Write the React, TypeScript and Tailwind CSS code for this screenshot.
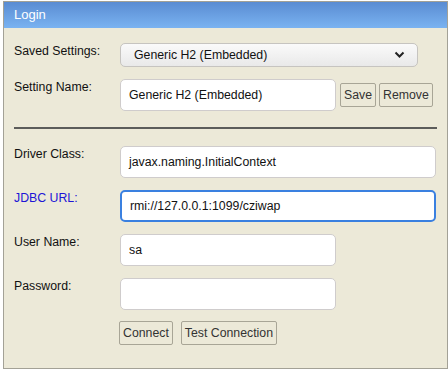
import React from "react";

const font = { fontFamily: '"Liberation Sans", Arial, sans-serif' };

function Label({ children, blue }: { children: React.ReactNode; blue?: boolean }) {
  return (
    <div className={`w-[106px] shrink-0 text-[12.3px] leading-[15px] pt-[1px] ${blue ? "text-[#2014d6]" : "text-[#111]"}`}>
      {children}
    </div>
  );
}

function Input({ value, w, focus }: { value: string; w: string; focus?: boolean }) {
  return (
    <div
      className={`${w} h-[32px] rounded-[5px] bg-white flex items-center pl-[8px] text-[12.3px] text-[#111] ${
        focus ? "border-2 border-[#3a80e0] pl-[7px]" : "border border-[#cfcccc]"
      }`}
    >
      {value}
    </div>
  );
}

function Btn({ children }: { children: React.ReactNode }) {
  return (
    <div className="h-[24px] px-[3px] flex items-center border border-[#a8a596] rounded-[2px] bg-[#ece9d8] text-[12.3px] text-[#333]">
      {children}
    </div>
  );
}

export default function App() {
  return (
    <div style={font} className="w-[448px] h-[371px] bg-white pt-[1px] pl-[3px]">
      <div className="w-[445px] h-[368px] border border-[#a3a196] bg-[#ece9d8] flex flex-col">
        <div className="h-[26px] bg-gradient-to-b from-[#5a8cd2] to-[#7ab3f1] text-white text-[13px] flex items-center pl-[10px]">
          Login
        </div>
        <div className="pl-[10px] pt-[15px] flex flex-col">
          <div className="flex items-start">
            <Label>Saved Settings:</Label>
            <div className="w-[298px] h-[24px] rounded-[5px] border border-[#c6c4c0] bg-gradient-to-b from-[#fafafa] to-[#e9e9e9] flex items-center justify-between pl-[13px] pr-[12px] text-[12.3px] text-[#111]">
              <span>Generic H2 (Embedded)</span>
              <svg width="11" height="8" viewBox="0 0 11 8">
                <path d="M1.5 1.5 L5.5 5.5 L9.5 1.5" fill="none" stroke="#222" strokeWidth="2" />
              </svg>
            </div>
          </div>
          <div className="flex items-start mt-[12px]">
            <Label>Setting Name:</Label>
            <Input value="Generic H2 (Embedded)" w="w-[216px]" />
            <div className="flex gap-[3px] ml-[4px] mt-[4px]">
              <Btn>Save</Btn>
              <Btn>Remove</Btn>
            </div>
          </div>
          <div className="mt-[16px] mr-[10px] h-[2px] bg-[#5c5c5a]" />
          <div className="flex items-start mt-[17px]">
            <Label>Driver Class:</Label>
            <Input value="javax.naming.InitialContext" w="w-[316px]" />
          </div>
          <div className="flex items-start mt-[12px]">
            <Label blue>JDBC URL:</Label>
            <Input value="rmi://127.0.0.1:1099/cziwap" w="w-[316px]" focus />
          </div>
          <div className="flex items-start mt-[12px]">
            <Label>User Name:</Label>
            <Input value="sa" w="w-[216px]" />
          </div>
          <div className="flex items-start mt-[12px]">
            <Label>Password:</Label>
            <Input value="" w="w-[216px]" />
          </div>
          <div className="flex gap-[8px] mt-[11px] ml-[105px]">
            <Btn>Connect</Btn>
            <Btn>Test Connection</Btn>
          </div>
        </div>
      </div>
    </div>
  );
}
